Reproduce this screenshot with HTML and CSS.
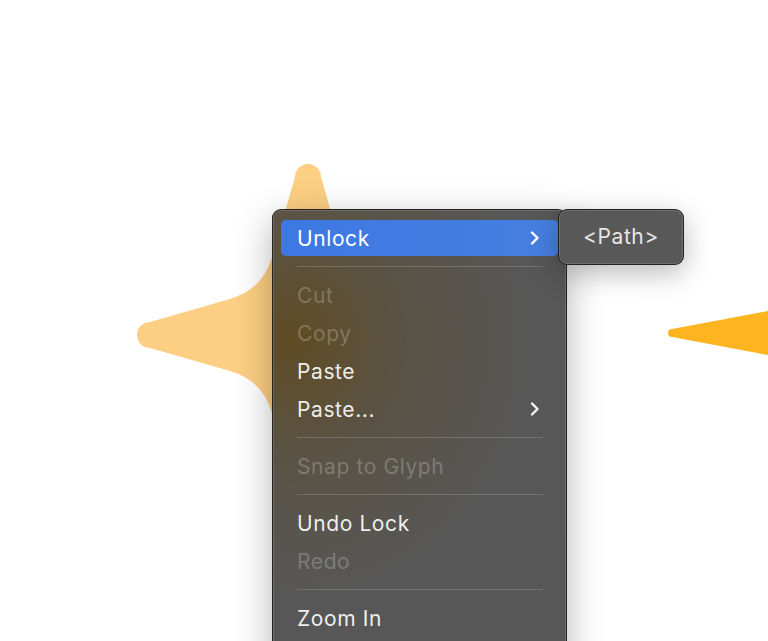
FILE: index.html
```html
<!DOCTYPE html>
<html lang="en">
<head>
    <meta charset="UTF-8">
    <meta name="viewport" content="width=device-width, initial-scale=1.0">
    <title>Context menu</title>
    <link rel="stylesheet" href="styles.css">
</head>
<body>

<div class="canvas">
    <svg class="artwork" width="768" height="641" viewBox="0 0 768 641">
        <!-- star behind the menu -->
        <path class="star-light" d="M295,177 A13,13 0 0 1 321,177 L344,257 Q353.4,289.6 386,299 L466,322 A13,13 0 0 1 466,348 L386,371 Q353.4,380.4 344,413 L321,493 A13,13 0 0 1 295,493 L272,413 Q262.6,380.4 230,371 L150,348 A13,13 0 0 1 150,322 L230,299 Q262.6,289.6 272,257 Z"/>
        <!-- point of the second star on the right -->
        <path class="star-dark" d="M672,329 L768,311 L768,355 L672,337 A4,4 0 0 1 672,329 Z"/>
    </svg>

    <div class="menu">
        <div class="menu-item active">
            <span>Unlock</span>
            <svg class="chevron" width="10" height="14" viewBox="0 0 10 14"><path d="M2 1.5 L7.5 7 L2 12.5"/></svg>
        </div>
        <div class="separator"></div>
        <div class="menu-item disabled"><span>Cut</span></div>
        <div class="menu-item disabled"><span>Copy</span></div>
        <div class="menu-item"><span>Paste</span></div>
        <div class="menu-item">
            <span>Paste...</span>
            <svg class="chevron" width="10" height="14" viewBox="0 0 10 14"><path d="M2 1.5 L7.5 7 L2 12.5"/></svg>
        </div>
        <div class="separator"></div>
        <div class="menu-item disabled"><span>Snap to Glyph</span></div>
        <div class="separator"></div>
        <div class="menu-item"><span>Undo Lock</span></div>
        <div class="menu-item disabled"><span>Redo</span></div>
        <div class="separator"></div>
        <div class="menu-item"><span>Zoom In</span></div>
    </div>

    <div class="submenu">
        <div class="submenu-item">&lt;Path&gt;</div>
    </div>
</div>

</body>
</html>
```

FILE: styles.css
```css
html, body {
    margin: 0;
    height: 641px;
    overflow: hidden;
    background: #fff;
}
.canvas {
    position: relative;
    width: 768px;
    height: 641px;
    font-family: Inter, "Noto Sans", sans-serif;
    font-size: 21px;
    letter-spacing: 0.6px;
}
.artwork {
    position: absolute;
    left: 0;
    top: 0;
}
.star-light {
    fill: #fdcf84;
}
.star-dark {
    fill: #fcb521;
}
.menu {
    position: absolute;
    left: 272px;
    top: 209px;
    display: flex;
    flex-direction: column;
    width: 277px;
    height: 480px;
    padding: 9px 8px;
    border: 1px solid rgba(0, 0, 0, 0.6);
    border-radius: 9px;
    background:
        radial-gradient(ellipse 240px 260px at 20px 130px, rgba(96, 76, 36, 1) 0%, rgba(92, 80, 56, 0.6) 45%, rgba(87, 87, 87, 0) 100%),
        #575757;
    box-shadow: inset 0 0 0 1px rgba(255, 255, 255, 0.14), 0 10px 36px rgba(0, 0, 0, 0.3);
}
.menu-item {
    display: flex;
    flex: none;
    align-items: center;
    justify-content: space-between;
    height: 36px;
    margin: 1px 0;
    padding: 0 18px 0 16px;
    border-radius: 5px;
    color: rgba(255, 255, 255, 0.92);
}
.menu-item.active {
    background: linear-gradient(90deg, #3d78e3, #477fe0);
    color: #fff;
}
.menu-item.disabled {
    color: rgba(255, 255, 255, 0.24);
}
.chevron path {
    fill: none;
    stroke: currentColor;
    stroke-width: 2.4;
    stroke-linecap: round;
    stroke-linejoin: round;
}
.separator {
    flex: none;
    height: 1px;
    margin: 9px 15px 9px 16px;
    background: rgba(255, 255, 255, 0.16);
}
.submenu {
    position: absolute;
    left: 558px;
    top: 209px;
    padding: 9px 0;
    border: 1px solid rgba(0, 0, 0, 0.6);
    border-radius: 9px;
    background: #585858;
    box-shadow: inset 0 0 0 1px rgba(255, 255, 255, 0.14), 0 8px 28px rgba(0, 0, 0, 0.28);
}
.submenu-item {
    height: 36px;
    line-height: 36px;
    padding: 0 24px;
    color: #e6e6e6;
}
```
